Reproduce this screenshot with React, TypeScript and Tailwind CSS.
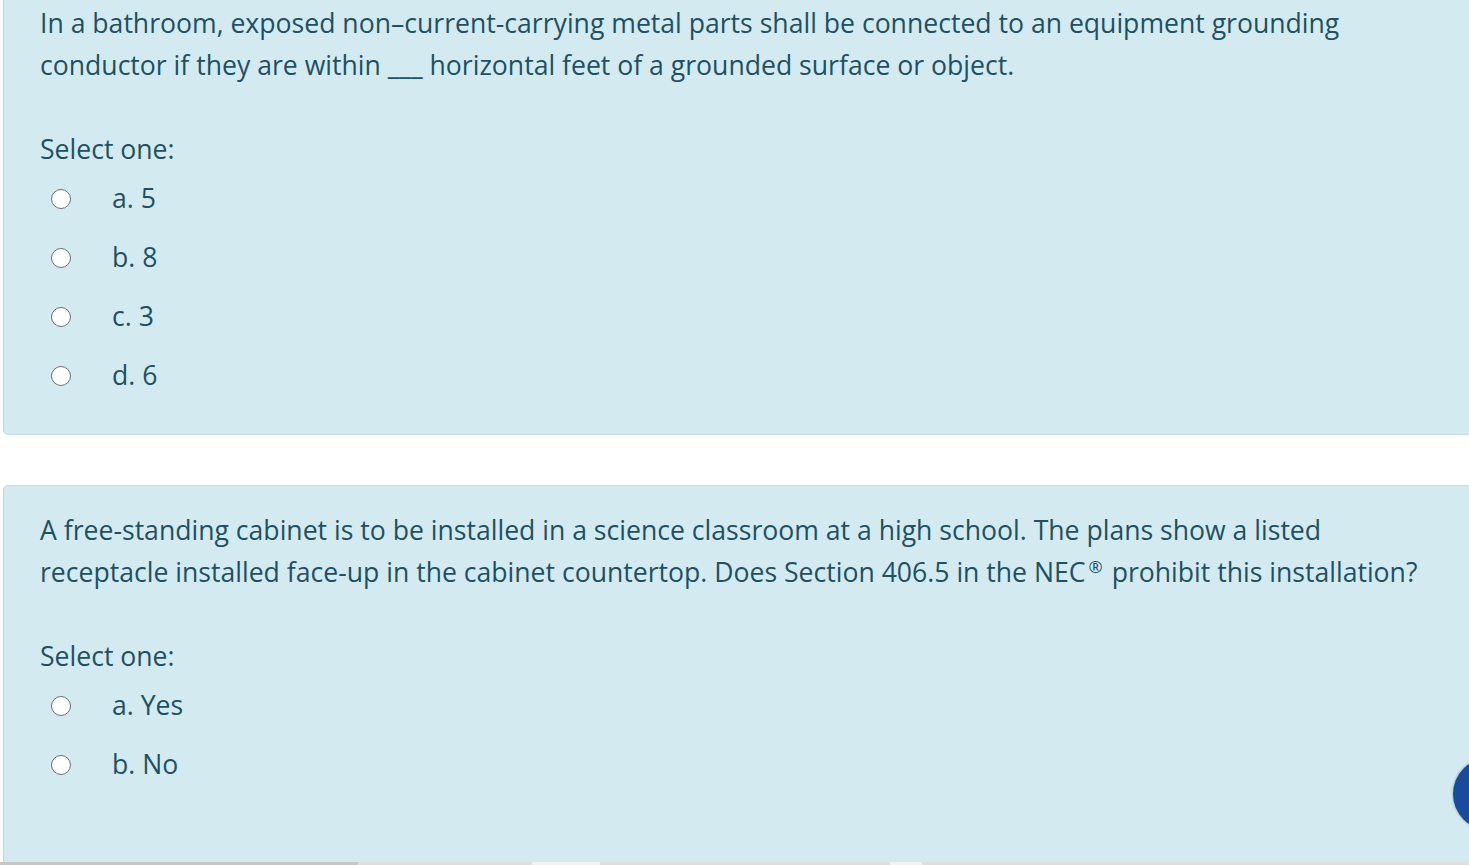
import { Fragment } from "react";

type Question = {
  lines: React.ReactNode[];
  options: string[];
  last?: boolean;
};

const questions: Question[] = [
  {
    lines: [
      "In a bathroom, exposed non–current-carrying metal parts shall be connected to an equipment grounding",
      "conductor if they are within ___ horizontal feet of a grounded surface or object.",
    ],
    options: ["a. 5", "b. 8", "c. 3", "d. 6"],
  },
  {
    lines: [
      "A free-standing cabinet is to be installed in a science classroom at a high school. The plans show a listed",
      <Fragment key="l2">
        receptacle installed face-up in the cabinet countertop. Does Section 406.5 in the NEC
        <sup className="text-[17px] ml-[3px] mr-[9px] relative -top-[9px]">®</sup>
        prohibit this installation?
      </Fragment>,
    ],
    options: ["a. Yes", "b. No"],
    last: true,
  },
];

function Radio() {
  return (
    <span className="ml-[11px] w-[20px] h-[20px] shrink-0 rounded-full bg-white border border-[#6f6f6f]" />
  );
}

function QuestionPanel({ q }: { q: Question }) {
  return (
    <div
      className={`ml-[3px] w-[1490px] bg-[#d4eaf1] border border-[#c3e0e9] border-l-[#c9d3d6] rounded-[5px] pl-[36px] pt-[23px] ${
        q.last ? "h-[400px]" : "pb-[29px]"
      }`}
    >
      <div className="leading-[42px]">
        {q.lines.map((line, i) => (
          <div key={i} className="whitespace-nowrap">
            {line}
          </div>
        ))}
      </div>
      <div className="mt-[42px] leading-[42px]">Select one:</div>
      <div className="-mt-[1px]">
        {q.options.map((opt) => (
          <div key={opt} className="flex items-center h-[59px]">
            <Radio />
            <span className="ml-[41px]">{opt}</span>
          </div>
        ))}
      </div>
    </div>
  );
}

export default function App() {
  return (
    <div
      className="relative w-full h-[865px] overflow-hidden bg-white text-[#1d5163] text-[26.6px]"
      style={{ fontFamily: "'Open Sans', 'Noto Sans', sans-serif" }}
    >
      <div className="-mt-[22px] flex flex-col gap-[50px]">
        {questions.map((q, i) => (
          <QuestionPanel key={i} q={q} />
        ))}
      </div>

      {/* floating button peeking in from the right */}
      <div className="absolute left-[1453px] top-[758px] w-[72px] h-[72px] rounded-full bg-[#1a4a9b] shadow-[0_0_3px_rgba(0,0,0,0.35)]" />

      {/* bottom scrollbar strip */}
      <div className="absolute left-0 right-0 bottom-0 h-[3px] flex bg-[#dedede]">
        <div className="w-[358px] bg-[#c6c6c6]" />
        <div className="w-[174px]" />
        <div className="w-[68px] bg-[#f2f2f2]" />
        <div className="w-[290px]" />
        <div className="w-[32px] bg-[#f2f2f2]" />
      </div>
    </div>
  );
}
